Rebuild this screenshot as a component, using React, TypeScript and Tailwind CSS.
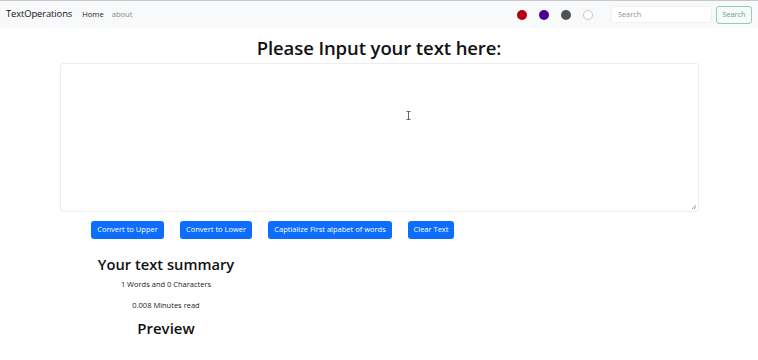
import React from "react";

export default function App() {
  return (
    <div className="w-[758px] h-[360px] bg-white overflow-hidden text-[#212529]" style={{ fontFamily: '"Open Sans", "Noto Sans", sans-serif' }}>
      <div className="h-[1px] bg-[#c8c8c8]" />
      <nav className="h-[27px] bg-[#f8f9fa] flex items-center pl-[6px] pr-[6px]">
        <span className="text-[9.4px] text-[#111] tracking-[-0.1px]">TextOperations</span>
        <span className="ml-[10px] text-[7.6px] text-[#222]">Home</span>
        <span className="ml-[8px] text-[7.6px] text-[#8a8a8a]">about</span>
        <div className="flex-1" />
        <div className="flex items-center gap-[12px]">
          <span className="w-[10px] h-[10px] rounded-full bg-[#b00012]" />
          <span className="w-[10px] h-[10px] rounded-full bg-[#4b0094]" />
          <span className="w-[10px] h-[10px] rounded-full bg-[#4f5152]" />
          <span className="w-[10px] h-[10px] rounded-full bg-white border border-[#c9c9c9]" />
        </div>
        <div className="ml-[18px] w-[101px] h-[17px] bg-white rounded-[3px] border border-[#f1f1f1] flex items-center pl-[6px] text-[7.3px] text-[#8a8f94]">Search</div>
        <div className="ml-[4px] w-[36px] h-[18px] rounded-[3px] border border-[#8fcfb3] flex items-center justify-center text-[7.3px] text-[#5aa585]">Search</div>
      </nav>
      <h1 className="text-center text-[18.5px] font-semibold leading-none mt-[11px] text-[#111] tracking-[-0.1px]">Please Input your text here:</h1>
      <div className="relative mx-auto mt-[5px] w-[639px] h-[149px] rounded-[3px] border border-[#ececec]">
        <svg className="absolute right-[1px] bottom-[1px]" width="6" height="6" viewBox="0 0 6 6">
          <path d="M5 1 L1 5 M5 3 L3 5" stroke="#888" strokeWidth="0.8" />
        </svg>
        <svg className="absolute left-[345px] top-[47px]" width="5" height="9" viewBox="0 0 5 9">
          <path d="M0.5 0.5 H4.5 M2.5 0.5 V8.5 M0.5 8.5 H4.5" stroke="#555" strokeWidth="0.9" fill="none" />
        </svg>
      </div>
      <div className="flex gap-[16px] pl-[91px] mt-[9px]">
        <button className="h-[18px] w-[73px] rounded-[3px] bg-[#0d6efd] text-white text-[7.5px]">Convert to Upper</button>
        <button className="h-[18px] w-[72px] rounded-[3px] bg-[#0d6efd] text-white text-[7.5px]">Convert to Lower</button>
        <button className="h-[18px] w-[124px] rounded-[3px] bg-[#0d6efd] text-white text-[7.5px]">Captialize First alpabet of words</button>
        <button className="h-[18px] w-[46px] rounded-[3px] bg-[#0d6efd] text-white text-[7.5px]">Clear Text</button>
      </div>
      <div className="ml-[91px] w-[150px] flex flex-col items-center text-[#111]">
        <h2 className="text-[14.7px] font-semibold leading-none mt-[18px]">Your text summary</h2>
        <p className="text-[7.5px] mt-[10px] leading-none text-[#222]">1 Words and 0 Characters</p>
        <p className="text-[7.5px] mt-[13px] leading-none text-[#222]">0.008 Minutes read</p>
        <h2 className="text-[15px] font-semibold leading-none mt-[12px]">Preview</h2>
      </div>
    </div>
  );
}
